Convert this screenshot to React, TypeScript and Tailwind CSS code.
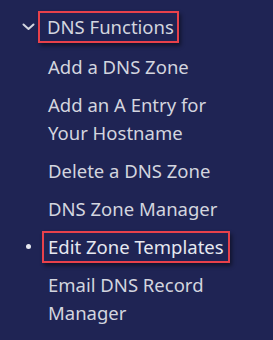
export default function App() {
  const items = [
    'Add a DNS Zone',
    'Add an A Entry for Your Hostname',
    'Delete a DNS Zone',
    'DNS Zone Manager',
    'Edit Zone Templates',
    'Email DNS Record Manager',
  ]

  return (
    <div className="w-[273px] h-[340px] overflow-hidden bg-[#1f2454] pt-[11px] font-['Noto_Sans',sans-serif] text-[18.5px] leading-[28px] text-[#d3d5df]">
      {/* Section header */}
      <div className="flex items-center">
        <svg className="ml-[22px] mr-[3px] h-[8px] w-[13px]" viewBox="0 0 13 8" fill="none">
          <polyline points="1.5,1.5 6.5,6 11.5,1.5" stroke="#d3d5df" strokeWidth="2" strokeLinecap="round" strokeLinejoin="round" />
        </svg>
        <span className="border-2 border-[#e8414b] pl-[7px] pr-[3px] shadow-[2px_3px_4px_rgba(0,0,0,0.45)]">
          DNS Functions
        </span>
      </div>

      {/* Sub items */}
      <ul className="mt-[10px] ml-[48px] flex w-[190px] flex-col gap-[10px]">
        {items.map((item) =>
          item === 'Edit Zone Templates' ? (
            <li key={item} className="relative">
              <span className="absolute left-[-22px] top-[11px] h-[5px] w-[5px] rounded-full bg-[#e6e8f0]" />
              <span className="-mx-[6px] -my-[2px] inline-block border-2 border-[#e8414b] px-[4px] text-[#e6e8f0] shadow-[2px_3px_4px_rgba(0,0,0,0.45)]">
                {item}
              </span>
            </li>
          ) : (
            <li key={item}>{item}</li>
          )
        )}
      </ul>
    </div>
  )
}
